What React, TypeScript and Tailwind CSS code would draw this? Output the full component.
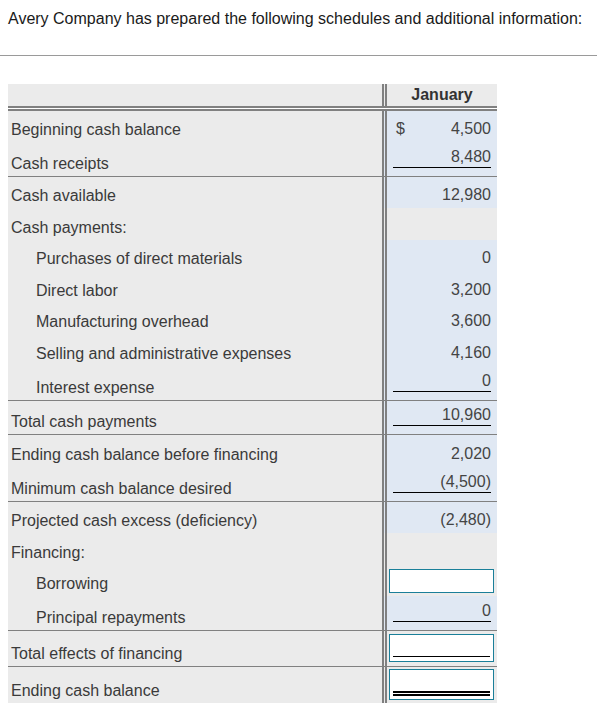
type Row = {
  label: string;
  h: string;
  indent?: boolean;
  blue?: boolean;
  value?: string;
  dollar?: boolean;
  under?: boolean;
  line?: boolean;
  input?: "plain" | "single" | "double";
};

const rows: Row[] = [
  { label: "Beginning cash balance", h: "h-[31px]", blue: true, value: "4,500", dollar: true },
  { label: "Cash receipts", h: "h-[35px]", blue: true, value: "8,480", under: true, line: true },
  { label: "Cash available", h: "h-[31px]", blue: true, value: "12,980" },
  { label: "Cash payments:", h: "h-[32px]" },
  { label: "Purchases of direct materials", h: "h-[31px]", indent: true, blue: true, value: "0" },
  { label: "Direct labor", h: "h-[32px]", indent: true, blue: true, value: "3,200" },
  { label: "Manufacturing overhead", h: "h-[31px]", indent: true, blue: true, value: "3,600" },
  { label: "Selling and administrative expenses", h: "h-[32px]", indent: true, blue: true, value: "4,160" },
  { label: "Interest expense", h: "h-[35px]", indent: true, blue: true, value: "0", under: true, line: true },
  { label: "Total cash payments", h: "h-[34px]", blue: true, value: "10,960", under: true, line: true },
  { label: "Ending cash balance before financing", h: "h-[32px]", blue: true, value: "2,020" },
  { label: "Minimum cash balance desired", h: "h-[35px]", blue: true, value: "(4,500)", under: true, line: true },
  { label: "Projected cash excess (deficiency)", h: "h-[31px]", blue: true, value: "(2,480)" },
  { label: "Financing:", h: "h-[32px]" },
  { label: "Borrowing", h: "h-[31px]", indent: true, input: "plain" },
  { label: "Principal repayments", h: "h-[35px]", indent: true, blue: true, value: "0", under: true, line: true },
  { label: "Total effects of financing", h: "h-[36px]", input: "single", line: true },
  { label: "Ending cash balance", h: "h-[36px]", input: "double" },
];

function ValueCell({ row }: { row: Row }) {
  if (row.input === "plain") {
    return <div className="mb-[3px] ml-[2px] mr-[3px] h-[24px] flex-1 border border-[#1a7f99] bg-white" />;
  }
  if (row.input === "single") {
    return (
      <div className="mb-[4px] ml-[2px] mr-[3px] flex h-[28px] flex-1 items-end border border-[#1a7f99] bg-white px-[3px] pb-[4px]">
        <div className="w-full border-b border-black" />
      </div>
    );
  }
  if (row.input === "double") {
    return (
      <div className="mb-[3px] ml-[2px] mr-[3px] flex h-[31px] flex-1 items-end border border-[#1a7f99] bg-white px-[3px] pb-[3px]">
        <div className="w-full border-b-[5px] border-double border-black" />
      </div>
    );
  }
  if (!row.value) return null;
  if (row.under) {
    return (
      <div className="mx-[6px] mb-[8px] flex-1 border-b border-black pb-[1px] text-right leading-[18px]">
        {row.value}
      </div>
    );
  }
  return (
    <div className="flex flex-1 justify-between pb-[4px] pl-[9px] pr-[6px] leading-[18px]">
      <span>{row.dollar ? "$" : ""}</span>
      <span>{row.value}</span>
    </div>
  );
}

export default function App() {
  return (
    <div className="min-h-screen bg-white font-['Liberation_Sans',Arial,sans-serif] text-base">
      <p className="whitespace-nowrap px-2 pt-[10px] leading-[18px] text-[#1a1a1a]">
        Avery Company has prepared the following schedules and additional information:
      </p>
      <div className="mt-[27px] h-px bg-[#9a9a9a]" />

      <div className="ml-2 mt-[28px] w-[489px]">
        <div className="grid h-[27px] grid-cols-[374px_115px] border-b-[5px] border-double border-[#808080]">
          <div className="bg-[#ebebeb]" />
          <div className="border-l-[5px] border-double border-[#808080] bg-[#ebebeb] text-center font-bold leading-[22px] text-[#333]">
            January
          </div>
        </div>

        {rows.map((row) => (
          <div key={row.label} className={`grid grid-cols-[374px_115px] ${row.h}`}>
            <div
              className={`flex items-end bg-[#ebebeb] pb-[3px] leading-[18px] text-[#3a3a3a] ${
                row.indent ? "pl-7" : "pl-[3px]"
              } ${row.line ? "border-b border-[#808080]" : ""}`}
            >
              {row.label}
            </div>
            <div
              className={`flex items-end border-l-[5px] border-double border-[#808080] text-[#444] ${
                row.blue ? "bg-[#e0e8f3]" : "bg-[#ebebeb]"
              } ${row.line ? "border-b-[1px] border-b-solid" : ""}`}
            >
              <ValueCell row={row} />
            </div>
          </div>
        ))}
      </div>
    </div>
  );
}
